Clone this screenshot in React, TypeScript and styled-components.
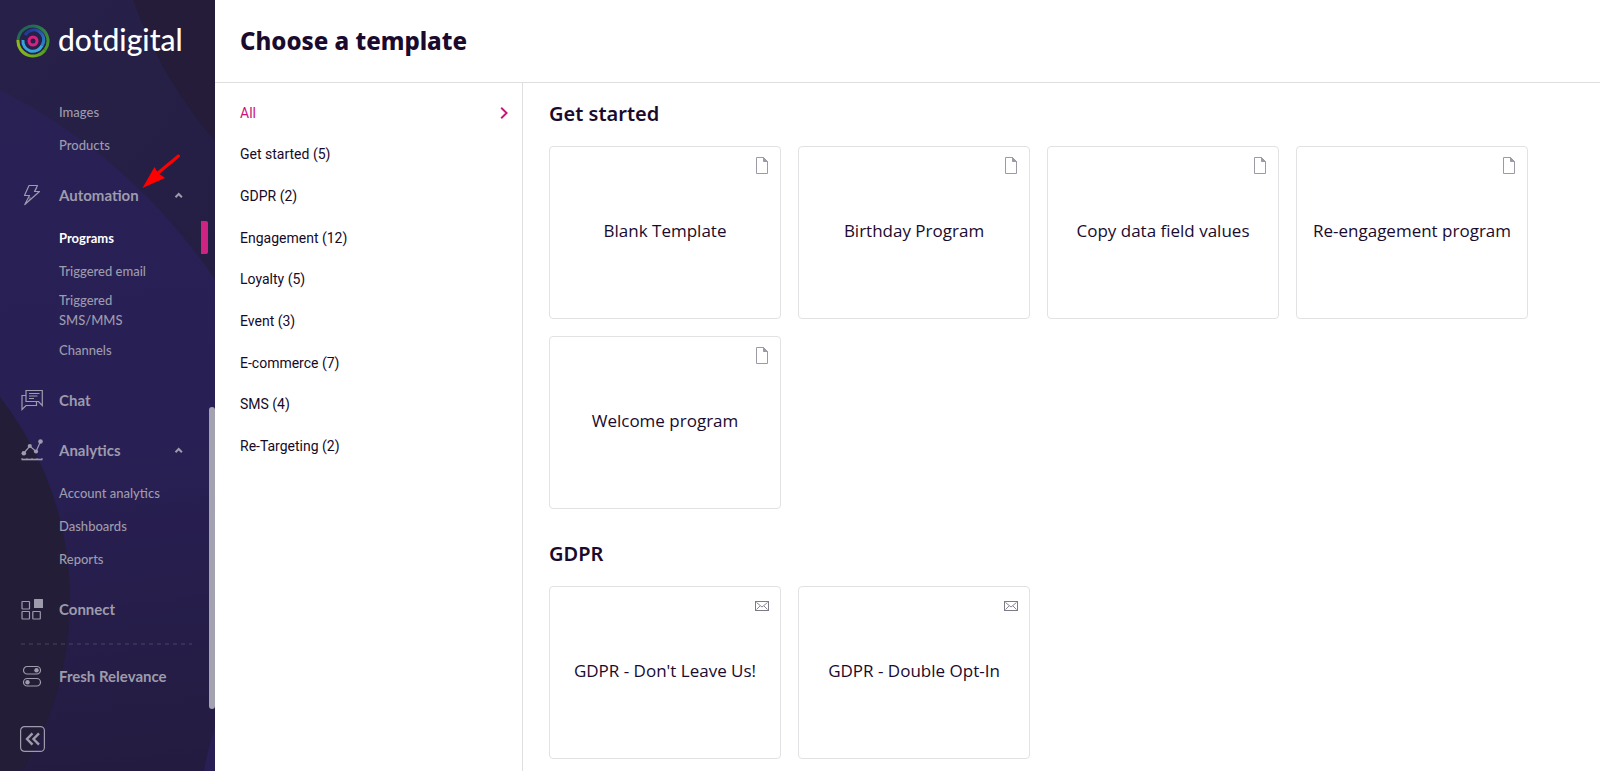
import React from 'react';
import styled, { createGlobalStyle } from 'styled-components';

const GlobalStyle = createGlobalStyle`
  * { box-sizing: border-box; }
  body { margin: 0; background: #ffffff; color: #1a0b2e; font-family: "Open Sans", sans-serif; }
  ul { list-style: none; margin: 0; padding: 0; }
  a { color: inherit; text-decoration: none; }
  button { font: inherit; color: inherit; background: none; border: 0; padding: 0; cursor: pointer; }
`;

const Page = styled.div`
  display: flex;
  min-height: 100vh;
`;

/* ---------- sidebar ---------- */

const Sidebar = styled.aside`
  position: relative;
  z-index: 0;
  display: flex;
  flex-direction: column;
  flex: 0 0 215px;
  padding-bottom: 19px;
  overflow: hidden;
  background: #261f46;
  color: #9d9bac;
  font-family: Lato, sans-serif;
`;

const Backdrop = styled.svg`
  position: absolute;
  inset: 0;
  z-index: -1;
  width: 100%;
  height: 100%;
`;

const Brand = styled.a`
  display: flex;
  align-items: center;
  gap: 8px;
  height: 82px;
  margin-bottom: 12px;
  padding-left: 16px;
  color: #ffffff;
  font-size: 30px;
  font-weight: 500;
  line-height: 36px;
`;

const BrandName = styled.span`
  padding-bottom: 4px;
`;

const Nav = styled.nav`
  display: flex;
  flex-direction: column;
`;

const navRow = `
  display: grid;
  grid-template-columns: 24px 1fr 10px;
  align-items: center;
  column-gap: 15px;
  width: 100%;
  height: 50px;
  padding: 0 31px 0 20px;
  font-size: 15px;
  font-weight: 700;
  text-align: left;
`;

const NavLink = styled.a`
  ${navRow}
`;

const NavToggle = styled.button`
  ${navRow}
`;

const NavLabel = styled.span`
  white-space: nowrap;
`;

const SubList = styled.ul`
  padding: 1px 0 9px;
`;

const SubItem = styled.li`
  display: flex;
`;

const SubLink = styled.a<{ $active?: boolean }>`
  display: flex;
  align-items: center;
  flex: 1;
  min-height: 33px;
  margin-right: 7px;
  padding: 3px 24px 3px 59px;
  border-right: 7px solid ${(p) => (p.$active ? '#cf2384' : 'transparent')};
  border-radius: 2px;
  color: ${(p) => (p.$active ? '#ffffff' : 'inherit')};
  font-size: 13px;
  font-weight: ${(p) => (p.$active ? 700 : 500)};
  line-height: 20px;
`;

const Divider = styled.svg`
  display: block;
  width: 171px;
  height: 2px;
  margin: 9px 0 6px 21px;
`;

const CollapseButton = styled.button`
  display: grid;
  place-items: center;
  width: 25px;
  height: 26px;
  margin: auto 0 0 20px;
`;

const ScrollThumb = styled.div`
  position: absolute;
  right: 0;
  top: 407px;
  width: 6px;
  height: 302px;
  border-radius: 3px;
  background: #a3a2b0;
`;

const Pointer = styled.svg`
  position: absolute;
  left: 140px;
  top: 150px;
  width: 45px;
  height: 42px;
  pointer-events: none;
`;

/* ---------- main area ---------- */

const Main = styled.main`
  display: flex;
  flex-direction: column;
  flex: 1;
  min-width: 0;
`;

const Header = styled.header`
  display: flex;
  align-items: center;
  height: 83px;
  padding: 0 25px;
  border-bottom: 1px solid #dededf;
`;

const Title = styled.h1`
  margin: 0;
  font-family: "Noto Sans", sans-serif;
  font-size: 24px;
  font-weight: 800;
  line-height: 32px;
`;

const Body = styled.div`
  display: flex;
  flex: 1;
`;

const Categories = styled.nav`
  flex: 0 0 308px;
  padding: 9px 13px 0 25px;
  border-right: 1px solid #dededf;
`;

const CategoryList = styled.ul`
  display: grid;
  grid-auto-rows: 1fr;
  height: 375px;
`;

const CategoryLink = styled.a<{ $active?: boolean }>`
  display: flex;
  align-items: center;
  justify-content: space-between;
  height: 100%;
  color: ${(p) => (p.$active ? '#c9157b' : '#150a28')};
  font-family: Roboto, sans-serif;
  font-size: 14px;
  line-height: 20px;
`;

const Content = styled.div`
  flex: 1;
  display: flex;
  flex-direction: column;
  gap: 31px;
  padding: 17px 25px 12px 26px;
`;

const SectionTitle = styled.h2`
  margin: 0 0 18px;
  font-family: "Noto Sans", sans-serif;
  font-size: 20px;
  font-weight: 600;
  line-height: 28px;
`;

const CardGrid = styled.div`
  display: grid;
  grid-template-columns: repeat(auto-fill, 232px);
  gap: 17px;
`;

const Card = styled.button`
  position: relative;
  display: grid;
  place-items: center;
  height: 173px;
  padding-bottom: 4px;
  border: 1px solid #e2e2e4;
  border-radius: 4px;
  font-size: 17px;
  line-height: 24px;
  white-space: nowrap;
`;

const CardIcon = styled.span`
  position: absolute;
  top: 10px;
  right: 11px;
  display: grid;
  place-items: center;
  width: 14px;
  height: 18px;
`;

/* ---------- drawings ---------- */

const LogoMark = () => (
  <svg width="34" height="34" viewBox="0 0 34 34" fill="none" strokeWidth="3" aria-hidden="true">
    <defs>
      <linearGradient id="ringTop" x1="0" y1="0" x2="1" y2="1">
        <stop offset="0" stopColor="#1b5a5c" />
        <stop offset="0.5" stopColor="#2f8045" />
        <stop offset="1" stopColor="#4f9a28" />
      </linearGradient>
      <linearGradient id="ringBottom" x1="0" y1="0" x2="1" y2="0">
        <stop offset="0" stopColor="#8dbb16" />
        <stop offset="1" stopColor="#569c26" />
      </linearGradient>
      <linearGradient id="innerTop" x1="0" y1="0" x2="1" y2="1">
        <stop offset="0" stopColor="#1d2f8f" />
        <stop offset="1" stopColor="#2f83cc" />
      </linearGradient>
    </defs>
    <path d="M2 16A15 15 0 1 1 29 26" stroke="url(#ringTop)" />
    <path d="M29 26A15 15 0 0 1 2 16" stroke="url(#ringBottom)" />
    <path d="M9 11A10 10 0 1 1 26 21.500" stroke="url(#innerTop)" />
    <path d="M26 21.500A10 10 0 0 1 7 16" stroke="#35a4dc" />
    <circle cx="17" cy="17" r="4" stroke="#d5217f" />
  </svg>
);

const stroke = { fill: 'none', stroke: 'currentColor', strokeWidth: 1.2 };

const BoltIcon = () => (
  <svg width="24" height="24" viewBox="0 0 24 24" {...stroke} strokeLinejoin="round" aria-hidden="true">
    <path d="M9 2.500H17.500L14.500 8.500H19.500L4.800 21.500L9.500 12.500H4.500Z" />
    <path d="M17 5L14.500 8.500M8 14.800H10.500L9 17.500" strokeWidth="0.600" />
  </svg>
);

const ChatIcon = () => (
  <svg width="24" height="24" viewBox="0 0 24 24" {...stroke} aria-hidden="true">
    <path d="M6 2.500H22.300V17.500L18.500 13.500H6Z" />
    <path d="M6 7.500H2V21.500L6 17.500H16.500V13.500" />
    <path d="M9 5.500H19.500M9 8H17.500M9 10.500H14" />
  </svg>
);

const AnalyticsIcon = () => (
  <svg width="24" height="24" viewBox="0 0 24 24" {...stroke} aria-hidden="true">
    <path d="M4 15L9.800 8L16 13.500L20.500 3.500" />
    <g fill="currentColor" stroke="none">
      <circle cx="3.800" cy="15.200" r="2.300" />
      <circle cx="9.800" cy="8" r="2.100" />
      <circle cx="16" cy="13.500" r="2.100" />
      <circle cx="20.500" cy="3.500" r="2.300" />
    </g>
    <path d="M1.500 21.500H22.500" strokeWidth="1.600" />
    <path d="M2 20V21M7 20V21M12 20V21M17 20V21M22 20V21" strokeWidth="0.900" />
  </svg>
);

const ConnectIcon = () => (
  <svg width="24" height="24" viewBox="0 0 24 24" {...stroke} aria-hidden="true">
    <rect x="2" y="4.500" width="7.500" height="7.500" rx="0.500" />
    <rect x="2" y="14.500" width="7.500" height="7.500" rx="0.500" />
    <rect x="12.800" y="14.500" width="7.500" height="7.500" rx="0.500" />
    <rect x="14" y="2" width="9" height="9" rx="0.500" fill="currentColor" stroke="none" />
  </svg>
);

const TogglesIcon = () => (
  <svg width="24" height="24" viewBox="0 0 24 24" {...stroke} aria-hidden="true">
    <rect x="3.500" y="2.500" width="17" height="7.500" rx="3.700" />
    <rect x="3.500" y="14.500" width="17" height="7.500" rx="3.700" />
    <circle cx="16.500" cy="6.200" r="2.200" fill="currentColor" stroke="none" />
    <circle cx="7.500" cy="18.200" r="2.200" fill="currentColor" stroke="none" />
  </svg>
);

const ChevronUp = () => (
  <svg width="10" height="10" viewBox="0 0 10 10" fill="none" stroke="currentColor" strokeWidth="2" aria-hidden="true">
    <path d="M1.500 7.300L4.700 4L7.900 7.300" />
  </svg>
);

const ChevronRight = () => (
  <svg width="10" height="14" viewBox="0 0 10 14" fill="none" stroke="currentColor" strokeWidth="1.900" aria-hidden="true">
    <path d="M2.200 1.800L7.600 7L2.200 12.200" />
  </svg>
);

const CollapseIcon = () => (
  <svg width="25" height="26" viewBox="0 0 25 26" fill="none" stroke="currentColor" aria-hidden="true">
    <rect x="0.600" y="0.600" width="23.800" height="24.800" rx="4" strokeWidth="1.200" />
    <path d="M12.500 7.300L7 13L12.500 18.700M19 7.300L13.500 13L19 18.700" strokeWidth="2.400" />
  </svg>
);

const PageIcon = () => (
  <svg width="14" height="18" viewBox="0 0 14 18" fill="none" stroke="#9b9aa5" aria-hidden="true">
    <path d="M1.500 0.500H8.500L12.500 4.500V16.500H1.500Z" />
    <path d="M8.500 0.500V4.500H12.500Z" fill="#9b9aa5" />
  </svg>
);

const MailIcon = () => (
  <svg width="14" height="10" viewBox="0 0 14 10" fill="none" stroke="#7c7b88" aria-hidden="true">
    <rect x="0.500" y="0.500" width="13" height="9" />
    <path d="M1.500 1.500L7 6L12.500 1.500M1.500 8.500L5 5M12.500 8.500L9 5" strokeWidth="0.900" />
  </svg>
);

/* ---------- data ---------- */

type NavEntry = { label: string; icon: React.ReactNode; children?: string[] };

const navEntries: NavEntry[] = [
  {
    label: 'Automation',
    icon: <BoltIcon />,
    children: ['Programs', 'Triggered email', 'Triggered SMS/MMS', 'Channels'],
  },
  { label: 'Chat', icon: <ChatIcon /> },
  { label: 'Analytics', icon: <AnalyticsIcon />, children: ['Account analytics', 'Dashboards', 'Reports'] },
  { label: 'Connect', icon: <ConnectIcon /> },
];

const categories = [
  'All',
  'Get started (5)',
  'GDPR (2)',
  'Engagement (12)',
  'Loyalty (5)',
  'Event (3)',
  'E-commerce (7)',
  'SMS (4)',
  'Re-Targeting (2)',
];

const sections = [
  {
    title: 'Get started',
    icon: <PageIcon />,
    cards: ['Blank Template', 'Birthday Program', 'Copy data field values', 'Re-engagement program', 'Welcome program'],
  },
  { title: 'GDPR', icon: <MailIcon />, cards: ["GDPR - Don't Leave Us!", 'GDPR - Double Opt-In'] },
];

const SubMenu = ({ items }: { items: string[] }) => (
  <SubList>
    {items.map((item) => (
      <SubItem key={item}>
        <SubLink href="#" $active={item === 'Programs'}>
          {item}
        </SubLink>
      </SubItem>
    ))}
  </SubList>
);

export default function App() {
  return (
    <Page>
      <GlobalStyle />
      <Sidebar>
        <Backdrop viewBox="0 0 215 771" preserveAspectRatio="xMinYMin slice" aria-hidden="true">
          <defs>
            <linearGradient id="base" x1="0" y1="0" x2="0.300" y2="1">
              <stop offset="0" stopColor="#272049" />
              <stop offset="1" stopColor="#241d3f" />
            </linearGradient>
            <linearGradient id="violet" x1="0" y1="90" x2="80" y2="771" gradientUnits="userSpaceOnUse">
              <stop offset="0" stopColor="#292054" />
              <stop offset="0.550" stopColor="#281f54" />
              <stop offset="1" stopColor="#241c40" />
            </linearGradient>
          </defs>
          <rect width="215" height="771" fill="url(#base)" />
          <circle cx="549" cy="-147" r="441" fill="#241c38" />
          <circle cx="-259" cy="600" r="572" fill="url(#violet)" />
          <circle cx="-259" cy="600" r="329" fill="#241d38" />
          <circle cx="500" cy="820" r="300" fill="#291f54" />
        </Backdrop>
        <Brand href="#">
          <LogoMark />
          <BrandName>dotdigital</BrandName>
        </Brand>
        <Nav aria-label="Main">
          <SubMenu items={['Images', 'Products']} />
          {navEntries.map(({ label, icon, children }) =>
            children ? (
              <React.Fragment key={label}>
                <NavToggle type="button" aria-expanded="true">
                  {icon}
                  <NavLabel>{label}</NavLabel>
                  <ChevronUp />
                </NavToggle>
                <SubMenu items={children} />
              </React.Fragment>
            ) : (
              <NavLink key={label} href="#">
                {icon}
                <NavLabel>{label}</NavLabel>
              </NavLink>
            ),
          )}
          <Divider aria-hidden="true">
            <line x1="0" y1="1" x2="171" y2="1" stroke="#4b455f" strokeDasharray="4 4" />
          </Divider>
          <NavLink href="#">
            <TogglesIcon />
            <NavLabel>Fresh Relevance</NavLabel>
          </NavLink>
        </Nav>
        <CollapseButton type="button" aria-label="Collapse menu">
          <CollapseIcon />
        </CollapseButton>
        <ScrollThumb />
        <Pointer viewBox="0 0 45 42" aria-hidden="true">
          <path d="M38.500 6L18 23" stroke="#ff0000" strokeWidth="3" strokeLinecap="round" />
          <path d="M2.500 38L14.500 17L18 23L25 28Z" fill="#ff0000" />
        </Pointer>
      </Sidebar>
      <Main>
        <Header>
          <Title>Choose a template</Title>
        </Header>
        <Body>
          <Categories aria-label="Template categories">
            <CategoryList>
              {categories.map((name) => (
                <li key={name}>
                  <CategoryLink href="#" $active={name === 'All'}>
                    {name}
                    {name === 'All' && <ChevronRight />}
                  </CategoryLink>
                </li>
              ))}
            </CategoryList>
          </Categories>
          <Content>
            {sections.map(({ title, icon, cards }) => (
              <section key={title}>
                <SectionTitle>{title}</SectionTitle>
                <CardGrid>
                  {cards.map((card) => (
                    <Card key={card} type="button">
                      <CardIcon>{icon}</CardIcon>
                      {card}
                    </Card>
                  ))}
                </CardGrid>
              </section>
            ))}
          </Content>
        </Body>
      </Main>
    </Page>
  );
}
